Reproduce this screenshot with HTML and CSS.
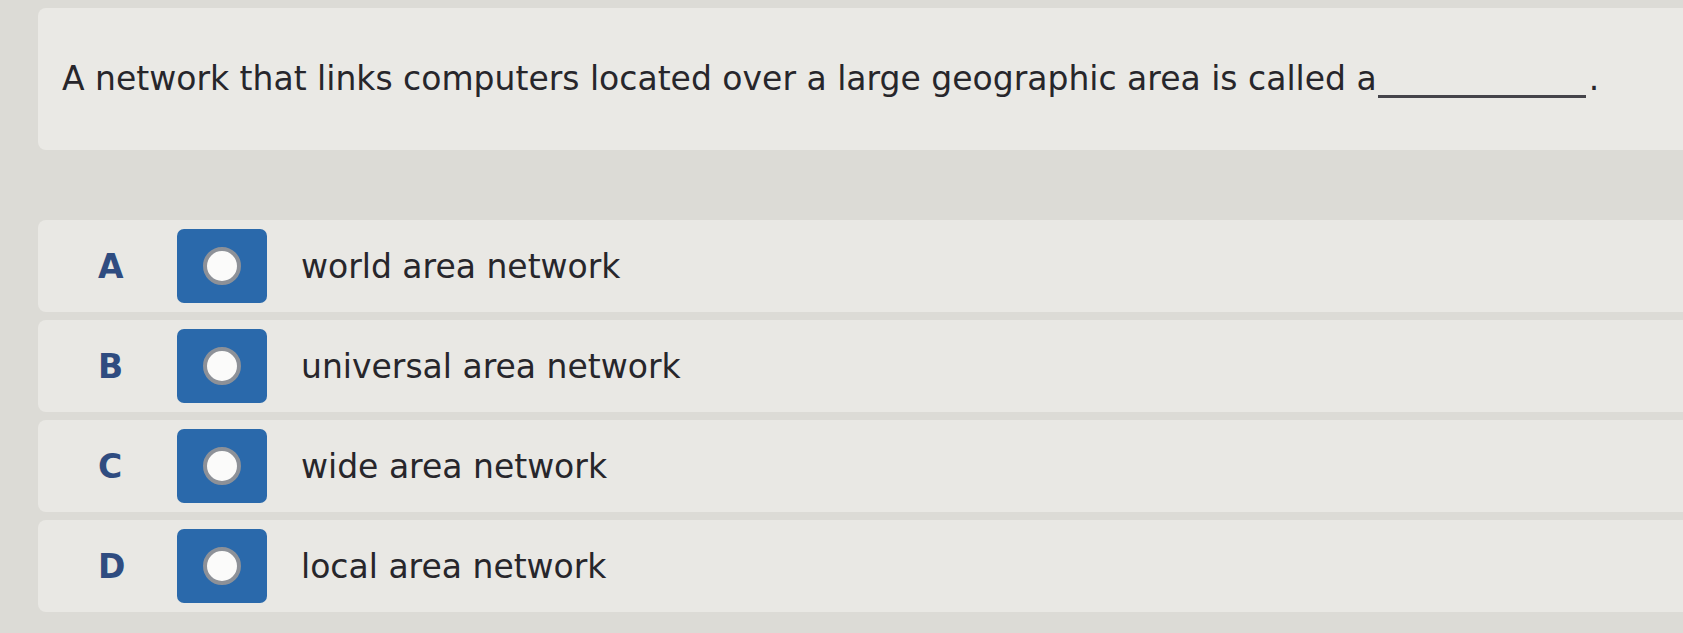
FILE: index.html
```html
<!DOCTYPE html>
<html>
<head>
<meta charset="utf-8">
<link rel="stylesheet" href="styles.css">
</head>
<body>
<div class="page">
  <div class="question">
    <p class="prompt">A network that links computers located over a large geographic area is called a<span class="blank"></span>.</p>
  </div>
  <div class="options">
    <div class="row">
      <span class="label">A</span>
      <span class="btn"><span class="radio"></span></span>
      <span class="text">world area network</span>
    </div>
    <div class="row">
      <span class="label">B</span>
      <span class="btn"><span class="radio"></span></span>
      <span class="text">universal area network</span>
    </div>
    <div class="row">
      <span class="label">C</span>
      <span class="btn"><span class="radio"></span></span>
      <span class="text">wide area network</span>
    </div>
    <div class="row">
      <span class="label">D</span>
      <span class="btn"><span class="radio"></span></span>
      <span class="text">local area network</span>
    </div>
  </div>
</div>
</body>
</html>
```

FILE: styles.css
```css
html, body {
  margin: 0;
  padding: 0;
  background: #dcdbd6;
  overflow: hidden;
}
body {
  font-family: "DejaVu Sans", Verdana, sans-serif;
  color: #27262b;
}
.page {
  padding: 8px 0 0 38px;
}
.question {
  height: 142px;
  background: #eae9e5;
  border-radius: 8px 0 0 8px;
  padding-left: 24px;
  display: flex;
  align-items: center;
}
.prompt {
  margin: 0;
  font-size: 33px;
  line-height: 40px;
  white-space: nowrap;
}
.blank {
  display: inline-block;
  width: 208px;
  height: 2px;
  border-bottom: 3px solid #45444a;
  margin: 0 3px 0 1px;
  vertical-align: -8px;
}
.options {
  margin-top: 70px;
  display: flex;
  flex-direction: column;
  gap: 8px;
}
.row {
  height: 92px;
  background: #e9e8e4;
  border-radius: 8px 0 0 8px;
  padding-left: 60px;
  display: flex;
  align-items: center;
}
.label {
  width: 79px;
  font-weight: bold;
  font-size: 33px;
  color: #2f4c80;
}
.btn {
  width: 90px;
  height: 74px;
  border-radius: 7px;
  background: #2a69ab;
  display: flex;
  align-items: center;
  justify-content: center;
}
.radio {
  width: 38px;
  height: 38px;
  box-sizing: border-box;
  border-radius: 50%;
  background: #fbfbfa;
  border: 4px solid #8d9198;
}
.text {
  margin-left: 34px;
  font-size: 33px;
}
```
